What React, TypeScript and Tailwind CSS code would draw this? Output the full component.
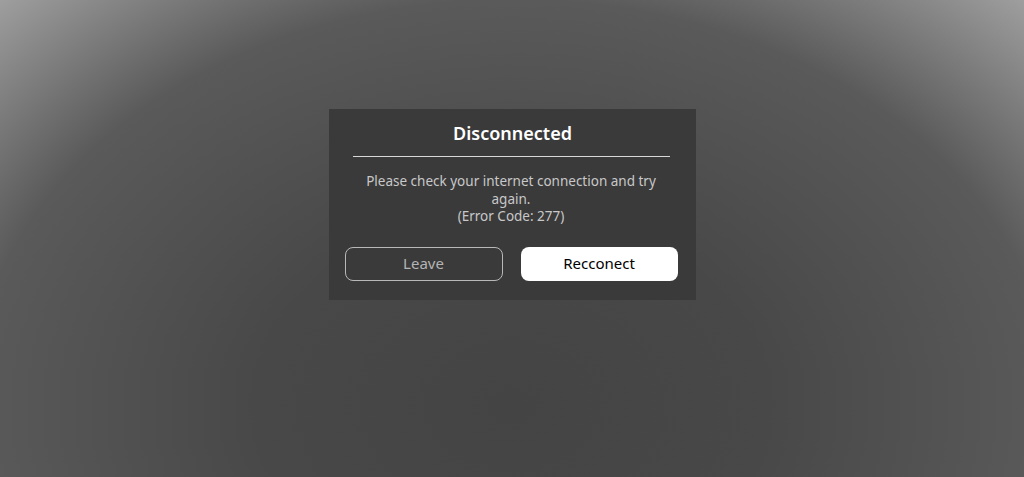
export default function App() {
    return (
        <div className="flex h-[477px] w-full items-start justify-center bg-[radial-gradient(ellipse_62%_100%_at_50%_85%,#444444_0%,#484848_40%,#525252_65%,#5a5a5a_85%,#9e9e9e_117%)] pt-[109px] font-['Noto_Sans',sans-serif]">
            {/* Dialog */}
            <div className="flex w-[367px] flex-col items-center bg-[#3a3a3b] pb-[19px] pl-4 pr-[18px] pt-[11px]">
                <h1 className="pl-[3px] text-[18px] font-semibold leading-[26px] text-white">Disconnected</h1>
                <div className="mt-[10px] h-px w-[317px] bg-[#d8d8d8]" />
                <p className="mt-[16px] w-[310px] text-center text-[13.5px] leading-[17.5px] text-[#c8c8c8]">
                    Please check your internet connection and try again.
                    <br />
                    (Error Code: 277)
                </p>
                <div className="mt-[21px] flex w-full gap-[18px]">
                    <button className="h-[34px] w-[158px] rounded-lg border border-[#b8b8b8] text-[15px] text-[#b4b4b4]">
                        Leave
                    </button>
                    <button className="h-[34px] w-[157px] rounded-lg bg-white text-[15px] text-black">
                        Recconect
                    </button>
                </div>
            </div>
        </div>
    );
}
